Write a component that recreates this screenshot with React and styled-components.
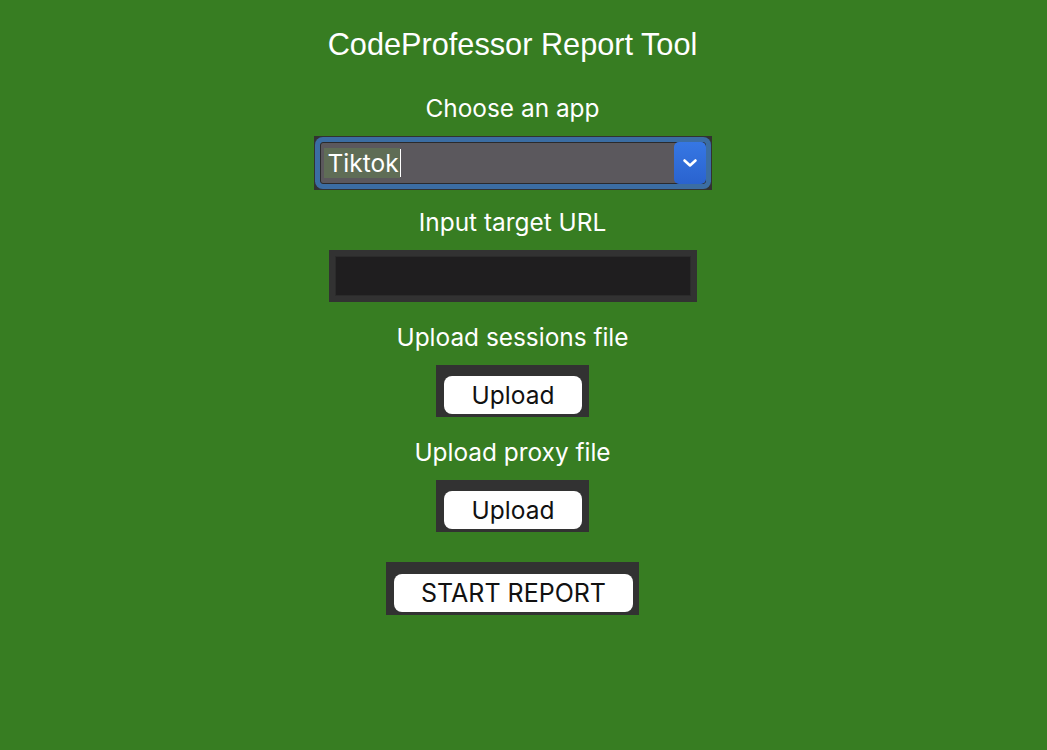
import React from 'react';
import styled, { createGlobalStyle } from 'styled-components';

const GlobalStyle = createGlobalStyle`
  html, body {
    margin: 0;
    padding: 0;
    background: #377d22;
  }
  body {
    font-family: Inter, "Noto Sans", sans-serif;
    color: #fff;
  }
`;

const Page = styled.main`
  display: flex;
  flex-direction: column;
  align-items: center;
  min-height: 750px;
  padding: 28px 22px 0 0;
  box-sizing: border-box;
`;

const Title = styled.h1`
  margin: 0 0 11px;
  font-family: "Liberation Sans", Arial, sans-serif;
  font-weight: 400;
  font-size: 30.7px;
  line-height: 34px;
  color: #fff;
`;

const Label = styled.div`
  margin: ${p => p.$top ?? 22}px 0 15px;
  font-size: 24.4px;
  line-height: 26px;
  color: #fff;
`;

const Frame = styled.div`
  display: flex;
  background: #323232;
  padding: ${p => p.$pad || '6px'};
  box-sizing: border-box;
  width: ${p => p.$w}px;
  height: ${p => p.$h}px;
`;

const SelectBox = styled.div`
  flex: 1;
  display: flex;
  align-items: center;
  position: relative;
  background: #5b585d;
  border: 1px solid #2a2a2c;
  border-radius: 3px;
  box-shadow: 0 0 0 5px #3b6da3;
  padding-left: 3px;
`;

const Selected = styled.span`
  font-size: 24.5px;
  line-height: 30px;
  padding: 0 1px 0 4px;
  background: #5f6d56;
  color: #fff;
`;

const Caret = styled.span`
  width: 1.5px;
  height: 28px;
  background: #fff;
`;

const ArrowButton = styled.span`
  position: absolute;
  right: -1px;
  top: -1px;
  bottom: -1px;
  width: 32px;
  display: flex;
  align-items: center;
  justify-content: center;
  background: linear-gradient(#3677e4, #2a63cf);
  border-radius: 5px;
`;

const UrlInput = styled.input`
  flex: 1;
  min-width: 0;
  background: #1f1e1f;
  border: 1px solid #2b2b2b;
  outline: none;
  color: #fff;
  font-size: 20px;
  padding: 0 6px;
`;

const WhiteButton = styled.button`
  flex: 1;
  background: #fff;
  border: none;
  border-radius: 8px;
  color: #111;
  font-family: Inter, "Noto Sans", sans-serif;
  font-size: ${p => p.$size || 24.5}px;
  padding: 0;
  cursor: pointer;
`;

const Chevron = () => (
  <svg width="16" height="10" viewBox="0 0 16 10">
    <path d="M2.5 2.5 L8 7.5 L13.5 2.5" fill="none" stroke="#fff" strokeWidth="2.6" strokeLinecap="round" strokeLinejoin="round" />
  </svg>
);

export default function App() {
  return (
    <>
      <GlobalStyle />
      <Page>
        <Title>CodeProfessor Report Tool</Title>

        <Label>Choose an app</Label>
        <Frame $w={398} $h={54}>
          <SelectBox role="combobox">
            <Selected>Tiktok</Selected>
            <Caret />
            <ArrowButton><Chevron /></ArrowButton>
          </SelectBox>
        </Frame>

        <Label $top={19}>Input target URL</Label>
        <Frame $w={368} $h={52}>
          <UrlInput type="text" />
        </Frame>

        <Label>Upload sessions file</Label>
        <Frame $w={153} $h={52} $pad="11px 7px 3px 8px">
          <WhiteButton>Upload</WhiteButton>
        </Frame>

        <Label>Upload proxy file</Label>
        <Frame $w={153} $h={52} $pad="11px 7px 3px 8px">
          <WhiteButton>Upload</WhiteButton>
        </Frame>

        <Frame $w={253} $h={53} $pad="12px 6px 3px 8px" style={{ marginTop: 30 }}>
          <WhiteButton $size={25}>START REPORT</WhiteButton>
        </Frame>
      </Page>
    </>
  );
}
